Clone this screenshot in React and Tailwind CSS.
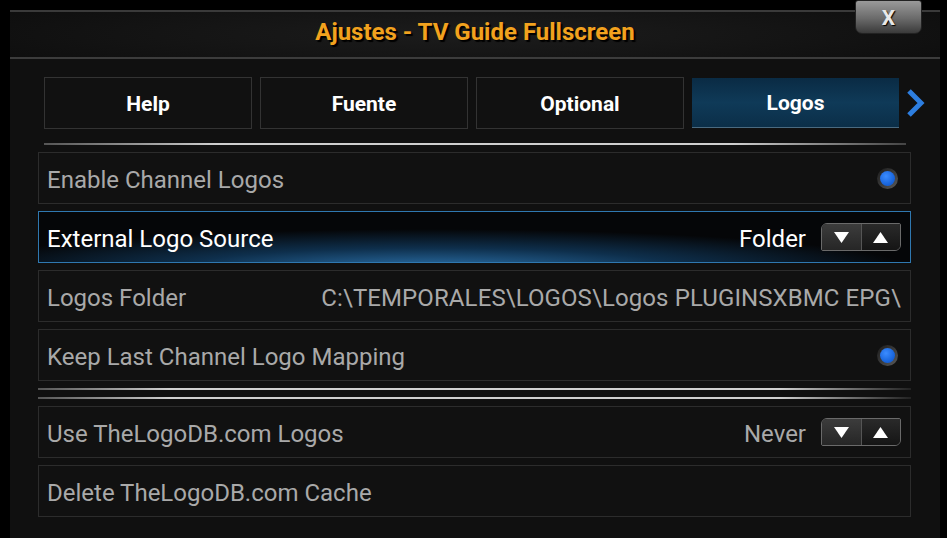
import { useState } from "react";

const tabs = ["Help", "Fuente", "Optional", "Logos"];

function Radio() {
  return (
    <div className="mr-[3px] w-[21px] h-[21px] rounded-full bg-[linear-gradient(135deg,#1a1a1a,#5a5a5a)] flex items-center justify-center">
      <div className="w-[15px] h-[15px] rounded-full bg-[radial-gradient(circle_at_40%_35%,#3b8cff,#1460d8_70%)]" />
    </div>
  );
}

function Spinner() {
  return (
    <div className="flex h-[28px] w-[80px] border border-[#6a6a6a] rounded-tl-[6px] rounded-br-[6px] rounded-tr-[2px] rounded-bl-[2px] overflow-hidden">
      <div className="flex-1 flex items-center justify-center bg-[linear-gradient(#3c3c3c,#262626)] border-r border-[#555]">
        <svg width="17" height="13" viewBox="0 0 17 13">
          <polygon points="1,1 16,1 8.5,12" fill="#fff" />
        </svg>
      </div>
      <div className="flex-1 flex items-center justify-center bg-[linear-gradient(#2a2a2a,#151515)]">
        <svg width="17" height="13" viewBox="0 0 17 13">
          <polygon points="1,12 16,12 8.5,1" fill="#fff" />
        </svg>
      </div>
    </div>
  );
}

function Row({ label, focused, children }) {
  return (
    <div
      className={
        "h-[52px] flex items-center pl-[8px] pr-[9px] border " +
        (focused
          ? "border-[#2f78b0] bg-[radial-gradient(ellipse_65%_95%_at_45%_115%,#2d74ae_0%,#0e2f4c_45%,#050608_85%)] text-white"
          : "border-[#2c2c2c] bg-[#111] text-[#a9a9a9]")
      }
    >
      <span className="text-[24px] leading-none pt-[3px]">{label}</span>
      <div className="ml-auto flex items-center gap-[15px]">{children}</div>
    </div>
  );
}

export default function App() {
  const [active, setActive] = useState("Logos");

  return (
    <div className="w-[947px] h-[538px] bg-black overflow-hidden font-['Roboto',sans-serif]">
      <div className="relative ml-[10px] mt-[10px] w-[930px] h-[528px] bg-[#101010] border-t-[2px] border-[#3a3a3a]">
        {/* title bar */}
        <div className="h-[47px] pb-[6px] flex items-center justify-center border-b-[2px] border-[#3c3c3c] bg-[radial-gradient(ellipse_60%_100%_at_50%_50%,#1c1c1c,#0e0e0e)]">
          <h1 className="text-[#f2a21e] font-bold text-[24px] [text-shadow:2px_2px_1px_#000]">
            Ajustes - TV Guide Fullscreen
          </h1>
        </div>
        <button className="absolute top-[-12px] left-[845px] w-[67px] h-[34px] rounded-b-[7px] rounded-t-[3px] border border-[#222] bg-[linear-gradient(#9a9a9a,#6a6a6a_55%,#3a3a3a)] flex items-center justify-center pt-[3px]">
          <span className="text-[#e8e8e8] font-bold text-[21px] leading-none [text-shadow:1px_1px_1px_#000]">X</span>
        </button>

        {/* tabs */}
        <div className="mt-[18px] ml-[34px] flex items-center gap-[8px]">
          {tabs.map((t) =>
            t === active ? (
              <button
                key={t}
                onClick={() => setActive(t)}
                className="w-[207px] h-[50px] pt-[3px] bg-[linear-gradient(#0a2b44,#0f3a58_50%,#0b2e48)] border-b border-[#4a6a80] text-white font-bold text-[21px]"
              >
                {t}
              </button>
            ) : (
              <button
                key={t}
                onClick={() => setActive(t)}
                className="w-[208px] h-[52px] pt-[3px] bg-[#111] border border-[#333] text-white font-bold text-[21px]"
              >
                {t}
              </button>
            )
          )}
          <svg width="24" height="30" viewBox="0 0 24 30" className="ml-[-4px]">
            <polyline points="6,3 18,15 6,27" fill="none" stroke="#2d7ee0" strokeWidth="5" />
          </svg>
        </div>

        <div className="mt-[14px] ml-[34px] w-[862px] h-[2px] bg-[linear-gradient(90deg,#555,#cfcfcf_20%,#cfcfcf_80%,#444)]" />

        {/* settings list */}
        <div className="mt-[7px] ml-[28px] w-[873px] flex flex-col gap-[7px]">
          <Row label="Enable Channel Logos">
            <Radio />
          </Row>
          <Row label="External Logo Source" focused>
            <span className="text-[24px] leading-none pt-[3px]">Folder</span>
            <Spinner />
          </Row>
          <Row label="Logos Folder">
            <span className="text-[24px] leading-none pt-[3px] tracking-[0.1px]">C:\TEMPORALES\LOGOS\Logos PLUGINSXBMC EPG\</span>
          </Row>
          <Row label="Keep Last Channel Logo Mapping">
            <Radio />
          </Row>
        </div>

        <div className="mt-[7px] ml-[28px] w-[873px] flex flex-col gap-[7px]">
          <div className="h-[2px] bg-[linear-gradient(90deg,#555,#cfcfcf_15%,#cfcfcf_85%,#222)]" />
          <div className="h-[2px] bg-[linear-gradient(90deg,#555,#cfcfcf_15%,#cfcfcf_85%,#222)]" />
        </div>

        <div className="mt-[7px] ml-[28px] w-[873px] flex flex-col gap-[7px]">
          <Row label="Use TheLogoDB.com Logos">
            <span className="text-[24px] leading-none pt-[3px]">Never</span>
            <Spinner />
          </Row>
          <Row label="Delete TheLogoDB.com Cache" />
        </div>
      </div>
    </div>
  );
}
